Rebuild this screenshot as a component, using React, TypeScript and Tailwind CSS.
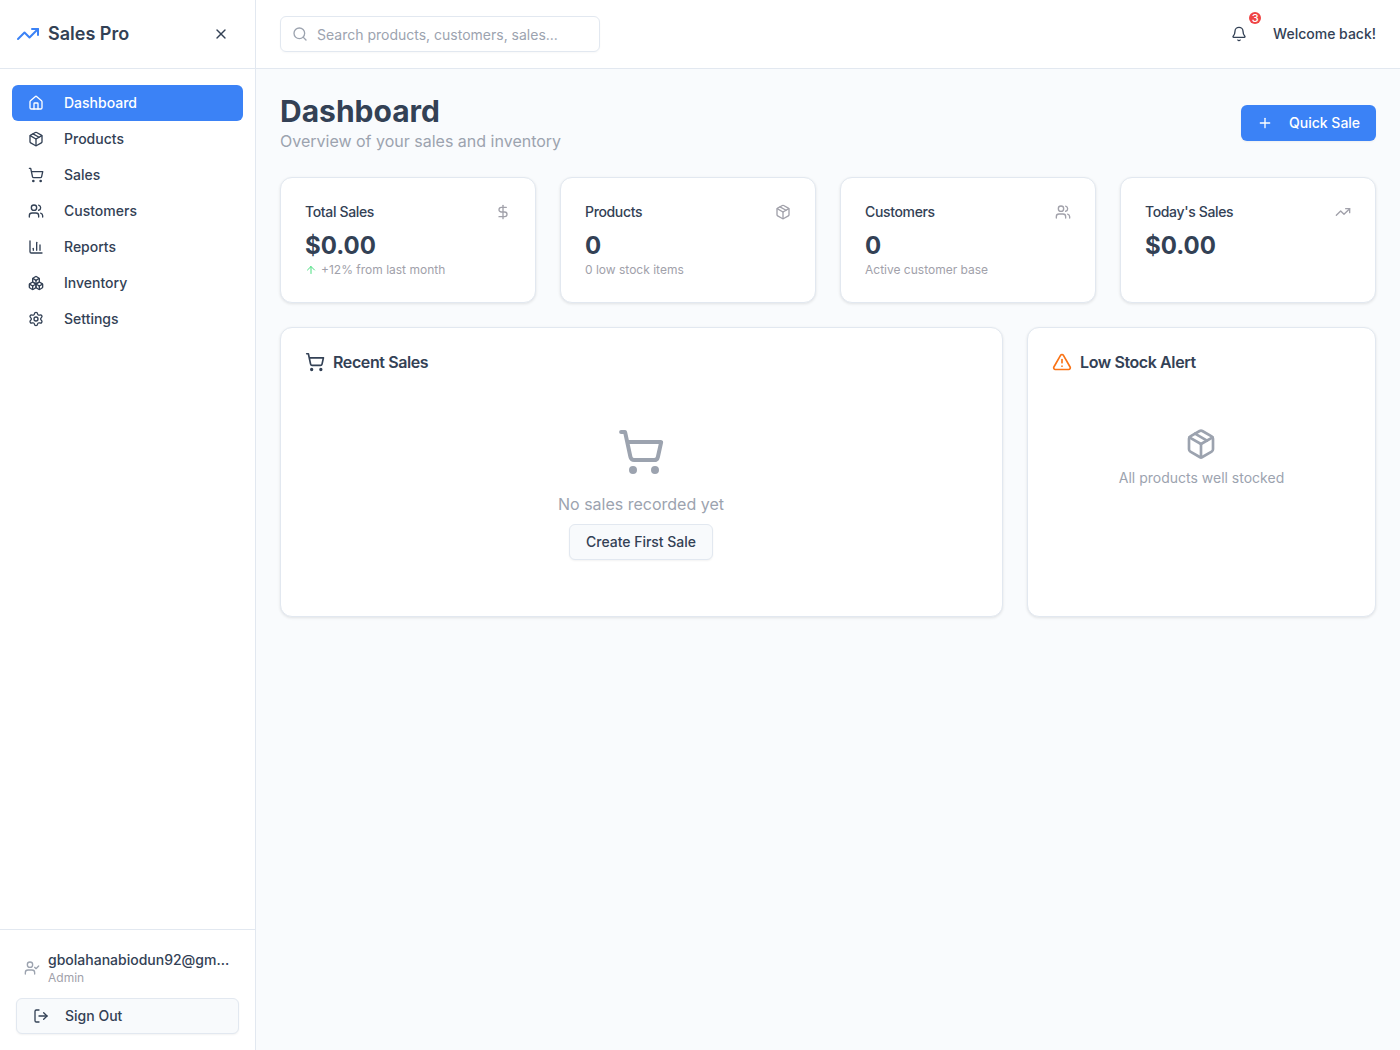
import { ReactNode } from 'react';
import {
  ArrowUp,
  Bell,
  Boxes,
  ChartColumn,
  DollarSign,
  House,
  LogOut,
  Package,
  Plus,
  Search,
  Settings,
  ShoppingCart,
  TrendingUp,
  TriangleAlert,
  UserCheck,
  Users,
  X,
} from 'lucide-react';

const navItems = [
  { label: 'Dashboard', icon: House, active: true },
  { label: 'Products', icon: Package },
  { label: 'Sales', icon: ShoppingCart },
  { label: 'Customers', icon: Users },
  { label: 'Reports', icon: ChartColumn },
  { label: 'Inventory', icon: Boxes },
  { label: 'Settings', icon: Settings },
];

function Sidebar() {
  return (
    <aside className="w-[256px] shrink-0 h-[1050px] flex flex-col bg-white border-r border-[#e2e8f0]">
      <div className="h-[69px] shrink-0 border-b border-[#e2e8f0] flex items-center justify-between pl-4 pr-[26px]">
        <div className="flex items-center gap-2">
          <TrendingUp className="w-6 h-6 text-[#3b82f6]" />
          <span className="text-[18px] leading-7 font-semibold text-[#334155]">Sales Pro</span>
        </div>
        <X className="w-4 h-4 text-[#334155]" />
      </div>

      <nav className="flex-1 px-3 py-4 flex flex-col">
        {navItems.map((item) => (
          <div
            key={item.label}
            className={
              item.active
                ? 'h-9 flex items-center gap-5 px-4 rounded-md bg-[#3b82f6] text-white text-sm font-medium'
                : 'h-9 flex items-center gap-5 px-4 rounded-md text-[#334155] text-sm font-medium'
            }
          >
            <item.icon className="w-4 h-4" />
            {item.label}
          </div>
        ))}
      </nav>

      <div className="border-t border-[#e2e8f0] px-4 pt-5 pb-4">
        <div className="flex items-center gap-2 mb-3 pl-2">
          <UserCheck className="w-4 h-4 shrink-0 text-[#9ca3af]" />
          <div className="w-[182px]">
            <p className="text-sm leading-5 font-medium text-[#334155] truncate">gbolahanabiodun92@gmail.com</p>
            <p className="text-xs leading-4 text-[#a1a1aa]">Admin</p>
          </div>
        </div>
        <button className="w-full h-9 flex items-center gap-4 px-4 rounded-md border border-[#e2e8f0] bg-[#f8fafc] text-sm font-medium text-[#334155] shadow-[0_1px_2px_0_rgba(0,0,0,0.05)]">
          <LogOut className="w-4 h-4" />
          Sign Out
        </button>
      </div>
    </aside>
  );
}

function Header() {
  return (
    <header className="h-[69px] shrink-0 bg-white border-b border-[#e2e8f0] px-6 flex items-center justify-between">
      <div className="w-[320px] h-9 flex items-center gap-2 pl-[11px] pr-3 rounded-md border border-[#e2e8f0] shadow-[0_1px_2px_0_rgba(0,0,0,0.03)]">
        <Search className="w-4 h-4 text-[#9ca3af]" />
        <span className="text-sm leading-5 pt-[2px] text-[#9ca3af] ml-[1px]">Search products, customers, sales...</span>
      </div>
      <div className="flex items-center gap-[26px]">
        <div className="relative">
          <Bell className="w-4 h-4 text-[#334155]" />
          <span className="absolute -top-[14px] left-[18px] w-[12px] h-[12px] rounded-full bg-[#ef4444] text-white text-[11px] leading-[12px] text-center font-medium">
            3
          </span>
        </div>
        <span className="text-sm font-medium text-[#334155]">Welcome back!</span>
      </div>
    </header>
  );
}

interface StatCardProps {
  title: string;
  value: string;
  icon: typeof Package;
  note?: ReactNode;
}

function StatCard({ title, value, icon: Icon, note }: StatCardProps) {
  return (
    <div className="h-[126px] rounded-xl border border-[#e2e8f0] bg-white shadow-[0_1px_3px_0_rgba(0,0,0,0.1)] px-6 pt-6">
      <div className="flex items-center justify-between h-5">
        <span className="text-sm font-medium text-[#334155] tracking-tight">{title}</span>
        <Icon className="w-4 h-4 text-[#a1a1aa]" />
      </div>
      <div className="mt-2 text-2xl leading-8 font-bold text-[#334155]">{value}</div>
      <div className="text-xs leading-4 text-[#a1a1aa]">{note}</div>
    </div>
  );
}

function Dashboard() {
  return (
    <main className="flex-1 p-6 flex flex-col gap-6">
      <div className="flex items-center justify-between h-[60px]">
        <div>
          <h1 className="text-[30px] leading-9 font-bold text-[#334155]">Dashboard</h1>
          <p className="text-base leading-6 text-[#9ca3af]">Overview of your sales and inventory</p>
        </div>
        <button className="h-9 w-[135px] flex items-center gap-4 pl-4 rounded-md bg-[#3b82f6] text-white text-sm font-medium shadow-[0_1px_2px_0_rgba(0,0,0,0.05)]">
          <Plus className="w-4 h-4" />
          Quick Sale
        </button>
      </div>

      <div className="grid grid-cols-4 gap-6">
        <StatCard
          title="Total Sales"
          value="$0.00"
          icon={DollarSign}
          note={
            <span className="flex items-center gap-1">
              <ArrowUp className="w-3 h-3 text-[#4ade80]" />
              +12% from last month
            </span>
          }
        />
        <StatCard title="Products" value="0" icon={Package} note="0 low stock items" />
        <StatCard title="Customers" value="0" icon={Users} note="Active customer base" />
        <StatCard title="Today's Sales" value="$0.00" icon={TrendingUp} />
      </div>

      <div className="grid grid-cols-[723px_349px] gap-6">
        <section className="h-[290px] rounded-xl border border-[#e2e8f0] bg-white shadow-[0_1px_3px_0_rgba(0,0,0,0.1)] p-6">
          <h2 className="flex items-center gap-2 h-5 text-base font-semibold text-[#334155] tracking-tight">
            <ShoppingCart className="w-5 h-5" />
            Recent Sales
          </h2>
          <div className="flex flex-col items-center mt-[56px] pr-[1px]">
            <ShoppingCart className="w-12 h-12 text-[#9ca3af]" />
            <p className="mt-4 text-base leading-6 text-[#9ca3af]">No sales recorded yet</p>
            <button className="mt-2 h-9 px-4 rounded-md border border-[#e2e8f0] bg-[#f8fafc] text-sm font-medium text-[#334155] tracking-[-0.03px] shadow-[0_1px_2px_0_rgba(0,0,0,0.05)]">
              Create First Sale
            </button>
          </div>
        </section>

        <section className="h-[290px] rounded-xl border border-[#e2e8f0] bg-white shadow-[0_1px_3px_0_rgba(0,0,0,0.1)] p-6">
          <h2 className="flex items-center gap-2 h-5 text-base font-semibold text-[#334155] tracking-tight">
            <TriangleAlert className="w-5 h-5 text-[#f97316]" />
            Low Stock Alert
          </h2>
          <div className="flex flex-col items-center mt-[56px]">
            <Package className="w-8 h-8 mr-[1px] text-[#9ca3af]" />
            <p className="mt-2 text-sm leading-5 text-[#9ca3af]">All products well stocked</p>
          </div>
        </section>
      </div>
    </main>
  );
}

export default function App() {
  return (
    <div className="flex h-[1050px] overflow-hidden bg-[#f9fbfd] font-['Inter',sans-serif]">
      <Sidebar />
      <div className="flex-1 min-w-0 flex flex-col">
        <Header />
        <Dashboard />
      </div>
    </div>
  );
}
